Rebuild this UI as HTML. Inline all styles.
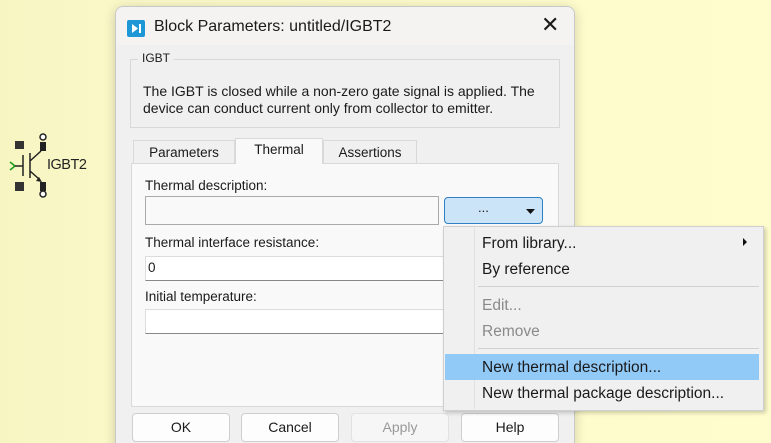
<!DOCTYPE html>
<html><head><style>
*{box-sizing:border-box;margin:0;padding:0}
html,body{width:771px;height:443px;overflow:hidden}
body{position:relative;font-family:"Liberation Sans",sans-serif;font-size:14px;color:#1a1a1a;
background:linear-gradient(90deg,#f7f5c2 0%,#fbf9c9 20%,#fffdcd 100%)}
.abs{position:absolute}
.dlg{left:115px;top:6px;width:460px;height:450px;background:#f0f0f0;border:1px solid #c8c8c8;border-radius:8px;box-shadow:0 2px 12px rgba(0,0,0,.18);overflow:hidden}
.title{left:0;top:0;width:100%;height:38px;background:#f4f3f1}
.inp{background:#fff;border:1px solid #dcdcdc;border-bottom:1px solid #888}
.btn{background:#fdfdfd;border:1px solid #cfcfcf;border-radius:4px;text-align:center;line-height:27px;font-size:14px}
.mi{position:absolute;left:482px;font-size:15.5px}
</style></head><body>
<svg class="abs" style="left:0;top:125px" width="50" height="80">
<rect x="15" y="16" width="9" height="8" fill="#333"/>
<rect x="15" y="57" width="9" height="9" fill="#333"/>
<rect x="40" y="17" width="6" height="9" fill="#222"/><circle cx="43" cy="12" r="3" fill="#fff" stroke="#222" stroke-width="1.5"/>
<rect x="40" y="57" width="6" height="9" fill="#222"/><circle cx="43" cy="69" r="3" fill="#fff" stroke="#222" stroke-width="1.5"/>
<path d="M10 37l5 4-5 4" stroke="#1a9a1a" fill="none" stroke-width="1.5"/>
<path d="M15 41h8M23 30v21M30 28v25M30 36l11-10M30 46l9 8" stroke="#222" stroke-width="1.5" fill="none"/>
<path d="M42 57l-6-1 3-4z" fill="#222"/>
</svg>
<div class="abs" style="left:47px;top:157px;font-size:14.5px;color:#222;letter-spacing:-.5px">IGBT2</div>

<div class="abs dlg">
 <div class="abs title"></div>
 <div class="abs" style="left:11px;top:13px;width:18px;height:17px;background:#1e97d6;border-radius:2px"></div>
 <svg class="abs" style="left:13px;top:15px" width="14" height="13"><path d="M3 2l6 4.5-6 4.5z" fill="#fff"/><rect x="10" y="2" width="2" height="9" fill="#fff"/></svg>
 <div class="abs" style="left:38px;top:11px;font-size:16px">Block Parameters: untitled/IGBT2</div>
 <div class="abs" style="left:425px;top:5px;font-size:22px;font-weight:300">✕</div>
 <div class="abs" style="left:14px;top:52px;width:430px;height:69px;border:1px solid #d8d8d8"></div>
 <div class="abs" style="left:22px;top:44px;background:#f0f0f0;padding:0 4px;font-size:12px">IGBT</div>
 <div class="abs" style="left:27px;top:76px;font-size:14px;line-height:17px;width:405px">The IGBT is closed while a non-zero gate signal is applied. The device can conduct current only from collector to emitter.</div>
 <div class="abs" style="left:15px;top:156px;width:428px;height:244px;background:#f9f9f9;border:1px solid #d9d9d9"></div>
 <div class="abs" style="left:17px;top:133px;width:102px;height:23px;border:1px solid #d9d9d9;border-bottom:none;background:#f0f0f0;text-align:center;line-height:23px;font-size:13.5px">Parameters</div>
 <div class="abs" style="left:119px;top:131px;width:88px;height:26px;border:1px solid #d9d9d9;border-bottom:none;background:#f9f9f9;text-align:center;line-height:22px;font-size:13.5px">Thermal</div>
 <div class="abs" style="left:207px;top:133px;width:94px;height:23px;border:1px solid #d9d9d9;border-bottom:none;background:#f0f0f0;text-align:center;line-height:23px;font-size:13.5px">Assertions</div>
 <div class="abs" style="left:29px;top:171px;font-size:13.5px">Thermal description:</div>
 <div class="abs inp" style="left:29px;top:189px;width:294px;height:29px;background:#f9f9f9;border:1px solid #aaa"></div>
 <div class="abs" style="left:328px;top:190px;width:99px;height:27px;background:#cce4f7;border:1px solid #2f7fc4;border-radius:4px"></div>
 <div class="abs" style="left:362px;top:193px;font-size:13px">...</div>
 <svg class="abs" style="left:410px;top:202px" width="10" height="6"><path d="M0 0h9l-4.5 5z" fill="#111"/></svg>
 <div class="abs" style="left:29px;top:228px;font-size:13.5px">Thermal interface resistance:</div>
 <div class="abs inp" style="left:29px;top:249px;width:300px;height:25px"></div>
 <div class="abs" style="left:32px;top:253px;font-size:13.5px">0</div>
 <div class="abs" style="left:29px;top:282px;font-size:13.5px">Initial temperature:</div>
 <div class="abs inp" style="left:29px;top:302px;width:300px;height:25px"></div>
 <div class="abs btn" style="left:16px;top:406px;width:98px;height:29px">OK</div>
 <div class="abs btn" style="left:125px;top:406px;width:98px;height:29px">Cancel</div>
 <div class="abs btn" style="left:235px;top:406px;width:98px;height:29px;color:#999;background:#f6f6f6;border-color:#e2e2e2">Apply</div>
 <div class="abs btn" style="left:345px;top:406px;width:98px;height:29px">Help</div>
</div>

<div class="abs" style="left:443px;top:226px;width:321px;height:185px;background:#f0f0f0;border:1px solid #cfcfcf;box-shadow:2px 2px 4px rgba(0,0,0,.2)"></div>
<div class="abs" style="left:474px;top:228px;width:1px;height:181px;background:#e0e0e0"></div>
<div class="abs" style="left:478px;top:286px;width:281px;height:1px;background:#d0d0d0"></div>
<div class="abs" style="left:478px;top:348px;width:281px;height:1px;background:#d0d0d0"></div>
<div class="abs" style="left:445px;top:354px;width:314px;height:26px;background:#91c9f7"></div>
<div class="mi" style="top:235px">From library...</div>
<svg class="abs" style="left:743px;top:238px" width="5" height="8"><path d="M0 0l4 4-4 4z" fill="#111"/></svg>
<div class="mi" style="top:261px">By reference</div>
<div class="mi" style="top:297px;color:#8a8a8a">Edit...</div>
<div class="mi" style="top:323px;color:#8a8a8a">Remove</div>
<div class="mi" style="top:359px">New thermal description...</div>
<div class="mi" style="top:385px">New thermal package description...</div>
</body></html>
